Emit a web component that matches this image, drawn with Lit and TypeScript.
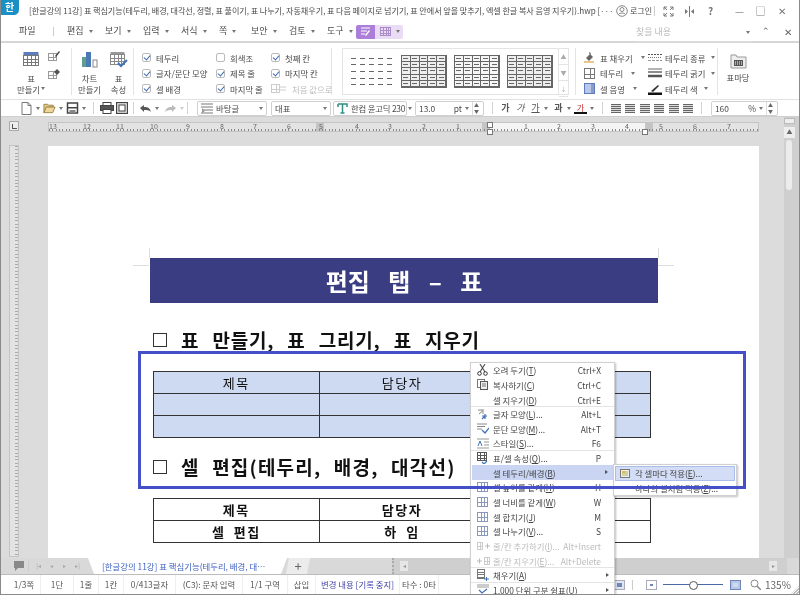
import { LitElement, html, css, svg } from "lit";
import { customElement } from "lit/decorators.js";

const ico = (w: number, h: number, body: unknown) =>
  html`<svg class="i" width=${w} height=${h} viewBox="0 0 ${w} ${h}">${body}</svg>`;

const grid = (x: number, y: number, w: number, h: number, cols: number, rows: number, c = "#777") => {
  const parts: unknown[] = [svg`<rect x=${x + 0.5} y=${y + 0.5} width=${w - 1} height=${h - 1} fill="none" stroke=${c}/>`];
  for (let i = 1; i < cols; i++) { const px = x + Math.round((w * i) / cols) + 0.5; parts.push(svg`<path d="M${px} ${y}V${y + h}" stroke=${c}/>`); }
  for (let i = 1; i < rows; i++) { const py = y + Math.round((h * i) / rows) + 0.5; parts.push(svg`<path d="M${x} ${py}H${x + w}" stroke=${c}/>`); }
  return parts;
};

const I = {
  tableBig: ico(16, 16, svg`<rect x="0.5" y="1" width="15" height="4" fill="#5b7cbd"/>${grid(0, 4, 16, 11, 4, 3, "#777")}`),
  tableS1: ico(13, 12, svg`${grid(0, 3, 9, 8, 2, 2, "#999")}<path d="M7 6l4-5 1 1-4 5z" fill="#444"/>`),
  tableS2: ico(13, 12, svg`${grid(0, 3, 9, 8, 2, 2, "#999")}<path d="M9 1l3 3-3 3-3-3z" fill="#555"/>`),
  chart: ico(16, 17, svg`<rect x="0" y="6" width="4" height="10" fill="#5f9e8e"/><rect x="4" y="1" width="5" height="15" fill="#4b79b5"/><rect x="11" y="9" width="4" height="7" fill="#fff" stroke="#888"/>`),
  tableProp: ico(18, 17, svg`<rect x="0.5" y="1" width="14" height="3" fill="#999"/>${grid(0, 3, 15, 11, 4, 3, "#888")}<path d="M8 12l3 3 6-6" fill="none" stroke="#4472b8" stroke-width="2"/>`),
  fill: ico(11, 11, svg`<path d="M2 6l4-4 3 3-4 4z" fill="#666"/><path d="M5 1l1-1 1 3z" fill="#333"/><path d="M0 10h10" stroke="#e8c98a" stroke-width="2"/>`),
  border: ico(11, 11, svg`${grid(0, 0, 11, 11, 2, 2, "#777")}`),
  shade: ico(11, 11, svg`<rect x="0.5" y="0.5" width="10" height="10" fill="#b9c8e8" stroke="#5b7cbd"/><rect x="7" y="1" width="3" height="9" fill="#8a9cc4"/>`),
  bType: ico(14, 10, svg`<path d="M0 1.5h14" stroke="#555" stroke-dasharray="2 1"/><path d="M0 4.5h14" stroke="#777" stroke-dasharray="1 1"/><path d="M0 7.5h14" stroke="#999" stroke-dasharray="3 1"/>`),
  bWeight: ico(14, 10, svg`<path d="M0 1h14" stroke="#666"/><path d="M0 4h14" stroke="#666" stroke-width="1.5"/><path d="M0 8h14" stroke="#555" stroke-width="2.5"/>`),
  bColor: ico(14, 12, svg`<path d="M3 8l7-6 1 1-6 6z" fill="#333"/><rect x="0" y="9.5" width="14" height="2.5" fill="#111"/>`),
  yard: ico(17, 16, svg`<path d="M1 2h5l1 2h9v11H1z" fill="#eee" stroke="#999"/><rect x="4.500" y="7.500" width="8" height="5" fill="#aaa" stroke="#555"/><path d="M6.500 8v5M8.500 8v5M10.500 8v5" stroke="#555"/>`),
  doc: ico(11, 13, svg`<path d="M1 .5h6l3 3v9H1z" fill="#fff" stroke="#777"/><path d="M7 .5v3h3" fill="none" stroke="#777"/>`),
  open: ico(14, 12, svg`<path d="M1 2h4l1 1h5v2H4L1 11z" fill="#e5c884" stroke="#9a8247"/><path d="M3.500 5H13l-2.500 6H1z" fill="#eed79a" stroke="#9a8247"/>`),
  save: ico(12, 12, svg`<rect x="1" y="1" width="10" height="10" fill="#fff" stroke="#444" stroke-width="1.500"/><rect x="1" y="5" width="10" height="1.500" fill="#444"/><rect x="3" y="8" width="6" height="3" fill="#888"/>`),
  print: ico(14, 12, svg`<rect x="3" y="0.500" width="8" height="3" fill="#fff" stroke="#444"/><rect x="0.500" y="3.500" width="13" height="5" fill="#555" stroke="#444"/><rect x="3" y="7.500" width="8" height="4" fill="#fff" stroke="#444"/>`),
  preview: ico(12, 12, svg`<rect x="0.500" y="0.500" width="11" height="11" fill="#ddd" stroke="#444" stroke-width="1.200"/><rect x="3" y="3" width="6" height="6" fill="#fff" stroke="#444"/>`),
  undo: ico(13, 9, svg`<path d="M1 4l4-3v2c4 0 6 1 7 5-2-2-4-2-7-2v2z" fill="#555"/>`),
  redo: ico(13, 9, svg`<path d="M12 4L8 1v2C4 3 2 4 1 8c2-2 4-2 7-2v2z" fill="#bbb"/>`),
  style: ico(12, 11, svg`<path d="M0 1h12M0 4h12M2 7h10M0 10h12" stroke="#777"/><path d="M1 5l3 3-3 2z" fill="#999"/>`),
  fontT: ico(11, 11, svg`<path d="M1 1h9v3M1 1v3M5.500 1v9M3.500 10h4" fill="none" stroke="#2f8f83" stroke-width="1.500"/>`),
  reset: ico(16, 11, svg`${grid(0, 1, 9, 9, 2, 2, "#ccc")}<path d="M9 4h6M9 7h6" stroke="#ccc"/>`),
  cut: ico(11, 12, svg`<path d="M3 0l5 8M8 0L3 8" stroke="#555" stroke-width="1.200" fill="none"/><circle cx="2.500" cy="9.500" r="1.800" fill="none" stroke="#333"/><circle cx="8.500" cy="9.500" r="1.800" fill="none" stroke="#333"/>`),
  copy: ico(11, 11, svg`<rect x="0.500" y="0.500" width="7" height="8" fill="#fff" stroke="#777"/><rect x="3.500" y="2.500" width="7" height="8" fill="#eee" stroke="#555"/><path d="M5 5h4M5 7h4" stroke="#777"/>`),
  charS: ico(11, 11, svg`<path d="M1 1h4v1.500L2 5M6 0v5" stroke="#888" fill="none"/><path d="M5 7h5M8 5v5M5 10l3-3" stroke="#4472b8" fill="none" stroke-width="1.200"/>`),
  para: ico(12, 11, svg`<path d="M0 1h10M0 3.500h8M0 6h5" stroke="#888"/><path d="M5 7l3 3 4-5" stroke="#4472b8" fill="none" stroke-width="1.300"/>`),
  styleM: ico(12, 11, svg`<path d="M0 1h12M7 4h5M7 7h5M0 10h12" stroke="#999"/><path d="M1 8l2-5 2 5" stroke="#4472b8" fill="none"/>`),
  prop: ico(12, 12, svg`${grid(0, 0, 10, 9, 3, 3, "#555")}<path d="M5 10l2 2 3-3" fill="none" stroke="#4472b8" stroke-width="1.200"/>`),
  g1: ico(11, 10, svg`${grid(0, 0, 11, 10, 3, 2, "#8899bb")}`),
  addRow: ico(13, 10, svg`${grid(0, 1, 6, 8, 2, 2, "#ccc")}<path d="M8 5h5M10.500 2.500v5" stroke="#bbb"/>`),
  delRow: ico(13, 10, svg`<path d="M0 5h5M2.500 2.500v5" stroke="#bbb"/>${grid(7, 1, 6, 8, 2, 2, "#ccc")}`),
  fillM: ico(12, 12, svg`${grid(0, 0, 8, 10, 1, 4, "#777")}<path d="M7 10h5M9.500 8v4" stroke="#4472b8"/>`),
  comma: ico(12, 11, svg`<path d="M0 1h12M0 3h12" stroke="#999"/><path d="M2 6l3 3 5-4" fill="none" stroke="#4472b8" stroke-width="1.300"/>`),
  pic: ico(10, 9, svg`<rect x="0.500" y="0.500" width="9" height="8" fill="#eee" stroke="#777"/><rect x="2" y="2" width="6" height="5" fill="#c9d3a5"/><rect x="2" y="2" width="3" height="2" fill="#e8b54a"/>`),
  user: ico(12, 12, svg`<circle cx="6" cy="6" r="5.300" fill="none" stroke="#888"/><circle cx="6" cy="4.500" r="2" fill="none" stroke="#888"/><path d="M2.500 9.500c1-2 6-2 7 0" fill="none" stroke="#888"/>`),
  expand: ico(11, 11, svg`<path d="M1 1l3 3M10 1L7 4M1 10l3-3M10 10L7 7M1 1h3M1 1v3M10 1H7M10 1v3M1 10h3M1 10V7M10 10H7M10 10V7" stroke="#777" fill="none"/>`),
  split: ico(11, 11, svg`<path d="M5.500 0v11" stroke="#777"/><path d="M4 5.500L1 3v5zM7 5.500L10 3v5z" fill="#777"/>`),
  logo: ico(18, 16, svg`<path d="M0 0h18v9c0 4-2 6-6 6H0z" fill="#1a90c4"/>`),
};

const rulerNums: [string, number][] = [
  ["13", 4], ["12", 38], ["11", 71], ["10", 105], ["9", 139], ["8", 173], ["7", 206], ["6", 240], ["5", 272], ["4", 308], ["3", 341], ["2", 375], ["1", 409],
  ["1", 477], ["2", 510], ["3", 544], ["4", 578], ["5", 612], ["6", 646], ["7", 680],
];

type Item = { i?: unknown; l: string; s?: string; d?: boolean; hi?: boolean; arrow?: boolean; sep?: boolean };
const label = (l: string) => {
  const m = l.match(/^(.*\()(.)(\).*)$/);
  return m ? html`${m[1]}<u>${m[2]}</u>${m[3]}` : l;
};
const menu: Item[] = [
  { i: I.cut, l: "오려 두기(T)", s: "Ctrl+X" },
  { i: I.copy, l: "복사하기(C)", s: "Ctrl+C" },
  { l: "셀 지우기(D)", s: "Ctrl+E", sep: true },
  { i: I.charS, l: "글자 모양(L)...", s: "Alt+L" },
  { i: I.para, l: "문단 모양(M)...", s: "Alt+T" },
  { i: I.styleM, l: "스타일(S)...", s: "F6", sep: true },
  { i: I.prop, l: "표/셀 속성(Q)...", s: "P" },
  { l: "셀 테두리/배경(B)", hi: true, arrow: true },
  { i: I.g1, l: "셀 높이를 같게(H)", s: "H" },
  { i: I.g1, l: "셀 너비를 같게(W)", s: "W" },
  { i: I.g1, l: "셀 합치기(J)", s: "M" },
  { i: I.g1, l: "셀 나누기(V)...", s: "S" },
  { i: I.addRow, l: "줄/칸 추가하기(I)...", s: "Alt+Insert", d: true },
  { i: I.delRow, l: "줄/칸 지우기(E)...", s: "Alt+Delete", d: true, sep: true },
  { i: I.fillM, l: "채우기(A)", arrow: true, sep: true },
  { i: I.comma, l: "1,000 단위 구분 쉼표(U)", arrow: true },
];

const status: [string, number, boolean?][] = [
  ["1/3쪽", 33], ["1단", 33], ["1줄", 25], ["1칸", 25], ["0/413글자", 52], ["(C3): 문자 입력", 67], ["1/1 구역", 45], ["삽입", 28], ["변경 내용 [기록 중지]", 84, true], ["타수 : 0타", 39],
];

@customElement("app-root")
export class AppRoot extends LitElement {
  static styles = css`
    :host { display: block; width: 800px; height: 595px; position: relative; overflow: hidden; background: #fff; font: 8.400px/1.2 "Noto Sans CJK KR", "Noto Sans", sans-serif; color: #4a4a4a; box-sizing: border-box; border: 1px solid #8a8a8a; border-top: 0; filter: blur(0.35px); }
    * { box-sizing: border-box; }
    svg.i { display: block; flex: none; }
    u { text-decoration: underline; }
    .arr { width: 0; height: 0; border: 2px solid transparent; border-top: 3px solid #777; border-bottom: 0; flex: none; }

    .title { height: 22px; display: flex; align-items: center; white-space: nowrap; }
    .logo { width: 28px; flex: none; align-self: flex-start; position: relative; }
    .logo b { position: absolute; left: 4px; top: 0; color: #fff; font-size: 10px; line-height: 14px; }
    .ttext { width: 587px; overflow: hidden; flex: none; font-size: 8.100px; line-height: 14px; word-spacing: -.2px; }
    .tright { display: flex; align-items: center; flex: none; }
    .login { margin: 0 2px; font-size: 8px; }
    .vsep { width: 1px; height: 10px; background: #ccc; flex: none; }
    .sp3 { width: 3px; }
    .sp8 { width: 8px; }
    .winbtn { width: 21px; display: flex; justify-content: center; color: #777; font-size: 10px; line-height: 12px; }

    .menubar { height: 21px; display: flex; align-items: center; border-bottom: 2px solid #d6d6d6; padding-left: 18px; position: relative; font-size: 9px; }
    .mi { display: flex; align-items: center; gap: 5px; width: 38px; }
    .mi.narrow { width: 32px; }
    .file { width: 34px; }
    .msep { width: 1px; height: 9px; background: #ccc; margin-right: 13px; }
    .tabA { width: 19px; height: 14px; background: #ab7fd9; display: flex; align-items: center; justify-content: center; border-radius: 2px 0 0 2px; margin-left: -9px; }
    .tabB { width: 28px; height: 14px; background: #eadcf4; display: flex; align-items: center; gap: 5px; padding-left: 5px; border-radius: 0 2px 2px 0; }
    .find { margin-left: auto; display: flex; align-items: center; height: 100%; padding-right: 7px; }
    .findbox { width: 116px; height: 18px; border-bottom: 1px solid #ddd; display: flex; align-items: center; justify-content: space-between; color: #bbb; padding-right: 2px; margin-top: 3px; }
    .caret { width: 13px; text-align: center; color: #666; margin-left: 7px; font-size: 9px; }
    .closex { width: 20px; text-align: right; color: #666; font-size: 10px; }

    .ribbon { height: 57px; display: flex; padding-top: 5px; padding-bottom: 5px; border-bottom: 1px solid #e2e2e2; }
    .g { border-right: 1px solid #e4e4e4; height: 47px; flex: none; display: flex; }
    .g1 { width: 71px; padding-left: 19px; gap: 6px; }
    .g2 { width: 62px; padding-left: 6px; gap: 6px; }
    .big { width: 22px; display: flex; flex-direction: column; align-items: center; text-align: center; line-height: 10.500px; padding-top: 3px; white-space: nowrap; }
    .big svg { margin-bottom: 6px; }
    .g2 .big { width: 23px; }
    .g2 .big svg { margin-bottom: 5px; }
    .big .mk { display: flex; align-items: center; gap: 1px; }
    .smalls { display: flex; flex-direction: column; gap: 6px; padding-top: 2px; }
    .g3 { width: 198px; padding-left: 8px; display: grid; grid-template-columns: 74px 55px 1fr; grid-auto-rows: 15.500px; padding-top: 2px; }
    .chk { display: flex; align-items: center; gap: 5px; white-space: nowrap; }
    .chk i { width: 9px; height: 9px; border: 1px solid #bbb; border-radius: 2px; background: #fff; position: relative; flex: none; }
    .chk i.on::after { content: ""; position: absolute; left: 2px; top: 0; width: 3px; height: 5px; border: solid #3f6cb0; border-width: 0 1.300px 1.300px 0; transform: rotate(40deg); }
    .chk.dis { color: #bbb; }
    .g4 { width: 244px; padding-left: 10px; }
    .gal { width: 227px; height: 47px; border: 1px solid #e4e4e4; display: flex; align-items: center; padding-left: 6px; gap: 7px; position: relative; }
    .thumb { width: 46px; height: 33px; display: grid; grid-template-columns: repeat(5, 1fr); grid-template-rows: repeat(5, 1fr); border: 1px solid #666; background: #eee; }
    .thumb span { border-right: 1px solid #666; border-bottom: 1px solid #666; display: flex; align-items: center; justify-content: center; }
    .thumb span::after { content: ""; width: 5px; height: 1px; background: #666; }
    .thumb.none { border: 0; background: none; width: 45px; }
    .thumb.none span { border: 0; }
    .thumb.b2 span { background: #f6f6f6; }
    .galbar { position: absolute; right: 0; top: 0; bottom: 0; width: 10px; border-left: 1px solid #e4e4e4; display: grid; grid-template-rows: 1fr 1fr 1fr; color: #aaa; font-size: 6px; text-align: center; line-height: 15px; }
    .galbar span { border-bottom: 1px solid #e4e4e4; }
    .g5 { width: 142px; padding-left: 8px; display: grid; grid-template-columns: 64px 1fr; grid-auto-rows: 15.500px; padding-top: 2px; }
    .cmd { display: flex; align-items: center; gap: 5px; white-space: nowrap; }
    .cmd.c { gap: 3px; }
    .cmd .arr { margin-left: 3px; }
    .g6 { border: 0; width: 40px; justify-content: flex-start; padding-top: 5px; flex-direction: column; align-items: center; gap: 3px; white-space: nowrap; }

    .tool { height: 17px; display: flex; align-items: center; padding-left: 19px; border-bottom: 1px solid #cfcfcf; }
    .pair { width: 23px; display: flex; align-items: center; gap: 3px; }
    .pair.wide { width: 25px; }
    .pair svg { width: 13px; }
    .one { width: 15px; display: flex; justify-content: center; }
    .pair .off { border-top-color: #ccc; }
    .tsep { width: 1px; height: 12px; background: #d4d4d4; flex: none; }
    .m4 { margin: 0 5px 0 4px; }
    .ml8 { margin-left: 8px; }
    .combo { height: 15px; border: 1px solid #d0d0d0; border-radius: 2px; background: #fff; display: flex; align-items: center; padding: 0 3px; gap: 3px; flex: none; white-space: nowrap; }
    .combo .grow { flex: 1; }
    .c1 { width: 70px; margin-left: 9px; }
    .c2 { width: 60px; margin-left: 4px; }
    .c3 { width: 74px; margin-left: 2px; letter-spacing: -.2px; }
    .c4 { width: 69px; margin-left: 8px; }
    .c5 { width: 67px; margin-left: 9px; }
    .spin { width: 8px; height: 13px; border-left: 1px solid #ddd; color: #666; font-size: 5px; line-height: 6px; text-align: center; }
    .fmt { display: flex; align-items: center; margin: 0 8px 0 5px; }
    .glyph { font-weight: 700; font-size: 9px; color: #555; width: 15px; text-align: center; }
    .glyph.it { font-style: italic; font-weight: 400; }
    .glyph.un { text-decoration: underline; font-weight: 400; }
    .fmt .arr { margin: 0 3px 0 1px; }
    .fmt .arr.last { margin: 0 0 0 3px; }
    .redg { color: #c33; width: 13px; border-bottom: 2px solid #111; font-size: 8px; line-height: 9px; text-align: center; }
    .alg { display: flex; gap: 4.400px; margin: 0 8px; }
    .alg i { width: 10px; height: 9px; display: block; background: repeating-linear-gradient(#666 0 1px, #ddd 1px 2px); }

    .work { height: 441px; background: #dcdcdc; display: flex; }
    .lcol { width: 47px; padding: 4px 0 0 8px; flex: none; }
    .corner { width: 10px; height: 10px; background: #eee; border: 1px solid #aaa; position: relative; }
    .corner::after { content: ""; position: absolute; left: 2px; top: 2px; width: 4px; height: 4px; border: solid #555; border-width: 0 0 1px 1px; }
    .vr { width: 10px; height: 412px; margin-top: 14px; background: #e3e3e3; border: 1px solid #c4c4c4; background-image: repeating-linear-gradient(#aaa 0 1px, transparent 1px 3.370px); background-size: 3px 100%; background-repeat: no-repeat; background-position: right; }
    .center { width: 711px; flex: none; padding-top: 5px; display: flex; flex-direction: column; }
    .ruler { height: 10px; background: #e3e3e3; border: 1px solid #c4c4c4; position: relative; flex: none; overflow: visible; }
    .ruler .ticks { position: absolute; left: 0; right: 0; bottom: 0; height: 2px; background: repeating-linear-gradient(90deg, #888 0 1px, transparent 1px 3.370px); }
    .ruler .sel { position: absolute; left: 441px; width: 155px; top: 0; bottom: 0; background: #f4f4f4; }
    .ruler .mark { position: absolute; top: 0; bottom: 0; width: 8px; background: #c4c4c4; }
    .mark.m1 { left: 267px; } .mark.m2 { left: 433px; } .mark.m3 { left: 596px; }
    .ruler span { position: absolute; top: -1px; font-size: 7px; line-height: 8px; color: #666; transform: translateX(-50%); }
    .ruler .h { position: absolute; width: 6px; height: 6px; background: #fff; border: 1px solid #777; }
    .h.a { left: 438px; top: -1px; } .h.b { left: 438px; top: 6px; } .h.c { left: 593px; top: 6px; }
    .page { margin-top: 14px; flex: 1; background: #fff; min-height: 0; overflow: hidden; padding: 112px 0 0 102px; position: relative; color: #111; }
    .crop { position: absolute; background: #ddd; }
    .cv1 { left: 101px; top: 102px; width: 1px; height: 10px; }
    .ch1 { left: 85px; top: 119px; width: 16px; height: 1px; }
    .cv2 { left: 610px; top: 102px; width: 1px; height: 10px; }
    .ch2 { left: 610px; top: 119px; width: 16px; height: 1px; }
    .hero { width: 508px; height: 45px; background: #3b3d82; color: #fff; font-size: 24px; font-weight: 700; line-height: 45px; text-align: center; word-spacing: 13px; }
    .h2 { display: flex; align-items: center; gap: 14px; font-size: 19px; font-weight: 700; line-height: 26px; margin-left: 3px; white-space: nowrap; }
    .h2 i { width: 14px; height: 14px; border: 1.500px solid #333; flex: none; }
    .h2.a { margin-top: 24px; word-spacing: 8px; letter-spacing: .8px; }
    .h2.b { margin-top: 16px; letter-spacing: 1.200px; word-spacing: 7px; }
    table { border-collapse: collapse; width: 498px; margin-left: 3px; table-layout: fixed; }
    td { border: 1px solid #333; height: 22px; padding: 0; text-align: center; font-size: 13px; line-height: 20px; letter-spacing: 1.500px; }
    .t1 { margin-top: 18px; }
    .t1 td { background: #ced9f2; }
    .t2 { margin-top: 18px; }
    .t2 td { font-weight: 700; word-spacing: 4px; }

    .rcol { flex: 1; position: relative; }
    .track { position: absolute; left: 25px; right: 0; top: 0; bottom: 0; background: #cfcfcf; }
    .sp { position: absolute; left: 25px; top: 1px; width: 11px; height: 6px; background: #eee; border: 1px solid #bbb; }
    .up { position: absolute; left: 25px; top: 10px; width: 11px; height: 11px; background: #eee; color: #666; font-size: 6px; text-align: center; line-height: 10px; }
    .thumbv { position: absolute; left: 27px; top: 23px; width: 6px; height: 50px; background: #ececec; border-radius: 3px; }

    .tabs { height: 17px; background: #d9d9d9; display: flex; align-items: stretch; border-bottom: 1px solid #bcbcbc; position: relative; }
    .tabctl { width: 87px; display: flex; align-items: center; padding-left: 13px; color: #aaa; font-size: 6px; flex: none; }
    .tabctl .vsep { margin: 0 3px 0 4px; }
    .tabctl em { font-style: normal; width: 13px; text-align: center; }
    .tab { width: 199px; flex: none; background: #fff; clip-path: polygon(0 0, 100% 0, 97% 100%, 3% 100%); color: #3b5fc0; padding: 0 20px 0 14px; line-height: 16px; white-space: nowrap; overflow: hidden; text-overflow: ellipsis; }
    .plus { width: 24px; flex: none; margin-left: -1px; background: #ececec; clip-path: polygon(12% 0, 100% 0, 88% 100%, 0 100%); text-align: center; font-size: 13px; line-height: 15px; color: #666; }
    .hs { margin-left: 82px; flex: 1; margin-right: 12px; display: flex; align-items: center; justify-content: space-between; padding: 0 10px 0 6px; background: #cfcfcf; color: #999; font-size: 6px; border-left: 2px dotted #aaa; }
    .hs em { font-style: normal; background: #e6e6e6; width: 8px; height: 10px; text-align: center; line-height: 10px; display: block; }

    .status { height: 20px; display: flex; align-items: center; background: #fff; white-space: nowrap; padding-left: 7px; color: #555; }
    .st { text-align: center; height: 100%; line-height: 18px; flex: none; border-right: 1px solid #eee; }
    .st.v { color: #3f3fa8; }
    .sright { position: absolute; left: 613px; bottom: 2px; height: 15px; display: flex; align-items: center; }
    .sright .vsep { margin-left: 7px; }
    .vb { width: 11px; height: 10px; border: 1px solid #aab; background: #dfe5f2; position: relative; flex: none; }
    .vb::after { content: ""; position: absolute; left: 2px; top: 2px; width: 5px; height: 4px; background: #6f86b8; }
    .vb.min { background: #fff; margin-left: 13px; }
    .vb.min::after { left: 3px; top: 3px; width: 3px; height: 2px; }
    .vb.max { background: #b6c8e6; border-color: #6f86b8; margin-left: 7px; }
    .vb.max::after { background: #cfdbf0; }
    .slider { width: 60px; height: 1px; background: #4a67a8; position: relative; margin-left: 6px; }
    .slider::after { content: ""; position: absolute; left: 26px; top: -3px; width: 7px; height: 7px; border-radius: 50%; background: #fff; border: 1px solid #555; }
    .lens { margin-left: 9px; }
    .pct { margin-left: 4px; font-size: 10px; color: #666; }
    .grip { position: absolute; right: 0; bottom: 0; width: 8px; height: 8px; background: repeating-linear-gradient(135deg, transparent 0 1px, #bbb 1px 2px); clip-path: polygon(100% 0, 100% 100%, 0 100%); }

    .ctx { position: absolute; left: 469px; top: 362px; width: 145px; background: #fff; border: 1px solid #d0d0d0; box-shadow: 1px 1px 2px rgba(0,0,0,.25); height: 240px; }
    .row { height: 14.650px; display: flex; align-items: center; padding: 0 13px 0 6px; white-space: nowrap; color: #444; position: relative; }
    .row .ic { width: 16px; flex: none; display: flex; justify-content: flex-start; }
    .row .lb { flex: 1; }
    .row.dis { color: #bbb; }
    .row.sep { box-shadow: inset 0 -1px 0 #e4e4e4; }
    .row.hi { background: #c9d5f2; margin: 0 1px; padding-left: 5px; }
    .tri { position: absolute; right: 5px; top: 5px; width: 0; height: 0; border: 2px solid transparent; border-left: 3px solid #555; border-right: 0; }
    .sub { position: absolute; left: 612px; top: 464px; width: 124px; height: 32px; background: #fff; border: 1px solid #d0d0d0; box-shadow: 1px 1px 2px rgba(0,0,0,.25); padding: 1px; }
    .subi { height: 15px; display: flex; align-items: center; gap: 5px; padding-left: 4px; white-space: nowrap; color: #444; }
    .subi.hi { background: #d3ddf5; border: 1px solid #a9bde8; }
    .subi.pl { padding-left: 20px; }
    .anno { position: absolute; left: 137px; top: 351px; width: 608px; height: 138px; border: 3px solid #4450c8; pointer-events: none; }
  `;

  private check(l: string, on: boolean) {
    return html`<div class="chk"><i class=${on ? "on" : ""}></i>${l}</div>`;
  }
  private thumb(cls: string) {
    return html`<div class="thumb ${cls}">${Array.from({ length: 25 }, () => html`<span></span>`)}</div>`;
  }

  render() {
    return html`
      <div class="title">
        <div class="logo">${I.logo}<b>한</b></div>
        <div class="ttext">[한글강의 11강] 표 핵심기능(테두리, 배경, 대각선, 정렬, 표 풀이기, 표 나누기, 자동채우기, 표 다음 페이지로 넘기기, 표 안에서 앞을 맞추기, 엑셀 한글 복사 음영 지우기).hwp [···</div>
        <div class="tright">
          ${I.user}<span class="login">로그인</span><span class="vsep"></span>
          <span class="sp3"></span><span class="winbtn">${I.expand}</span><span class="winbtn">${I.split}</span><span class="winbtn"><b>?</b></span>
          <span class="sp8"></span>
          <span class="winbtn">—</span><span class="winbtn">□</span><span class="winbtn">✕</span>
        </div>
      </div>

      <div class="menubar">
        <span class="file">파일</span><span class="msep"></span>
        ${["편집", "보기", "입력", "서식", "쪽", "보안", "검토", "도구"].map((m) => html`<span class="mi ${m === "쪽" ? "narrow" : ""}">${m}<span class="arr"></span></span>`)}
        <span class="tabA">${ico(11, 10, svg`<path d="M1 1h9M1 4h6M1 7h4" stroke="#fff"/><path d="M5 8l4-5 1 1-4 5z" fill="#fff"/>`)}</span>
        <span class="tabB">${ico(11, 9, svg`${grid(0, 0, 11, 9, 4, 3, "#a98cc8")}`)}<span class="arr"></span></span>
        <div class="find">
          <div class="findbox"><span>찾을 내용</span><span class="arr"></span></div>
          <span class="caret">⌃</span>
          <span class="closex">✕</span>
        </div>
      </div>

      <div class="ribbon">
        <div class="g g1">
          <div class="big">${I.tableBig}<span>표</span><span class="mk">만들기<span class="arr"></span></span></div>
          <div class="smalls">${I.tableS1}${I.tableS2}</div>
        </div>
        <div class="g g2">
          <div class="big">${I.chart}<span>차트</span><span>만들기</span></div>
          <div class="big">${I.tableProp}<span>표</span><span>속성</span></div>
        </div>
        <div class="g g3">
          ${this.check("테두리", true)}${this.check("회색조", false)}${this.check("첫째 칸", true)}
          ${this.check("글자/문단 모양", true)}${this.check("제목 줄", true)}${this.check("마지막 칸", true)}
          ${this.check("셀 배경", true)}${this.check("마지막 줄", true)}
          <div class="chk dis">${I.reset}처음 값으로</div>
        </div>
        <div class="g g4">
          <div class="gal">
            ${this.thumb("none")}${this.thumb("b1")}${this.thumb("b2")}${this.thumb("b1")}
            <div class="galbar"><span>▲</span><span>▼</span><span>↓</span></div>
          </div>
        </div>
        <div class="g g5">
          <div class="cmd">${I.fill}표 채우기<span class="arr"></span></div>
          <div class="cmd c">${I.bType}테두리 종류<span class="arr"></span></div>
          <div class="cmd">${I.border}테두리<span class="arr"></span></div>
          <div class="cmd c">${I.bWeight}테두리 굵기<span class="arr"></span></div>
          <div class="cmd">${I.shade}셀 음영<span class="arr"></span></div>
          <div class="cmd c">${I.bColor}테두리 색<span class="arr"></span></div>
        </div>
        <div class="g g6">${I.yard}<span>표마당</span></div>
      </div>

      <div class="tool">
        <span class="pair">${I.doc}<span class="arr"></span></span>
        <span class="pair">${I.open}<span class="arr"></span></span>
        <span class="pair">${I.save}<span class="arr"></span></span>
        <span class="tsep m4"></span>
        <span class="one">${I.print}</span><span class="one">${I.preview}</span>
        <span class="tsep m4"></span>
        <span class="pair wide">${I.undo}<span class="arr"></span></span>
        <span class="pair">${I.redo}<span class="arr off"></span></span>
        <span class="tsep"></span>
        <div class="combo c1">${I.style}<span class="grow">바탕글</span><span class="arr"></span></div>
        <div class="combo c2"><span class="grow">대표</span><span class="arr"></span></div>
        <div class="combo c3">${I.fontT}<span class="grow">한컴 윤고딕 230</span><span class="arr"></span></div>
        <div class="combo c4"><span class="grow">13.0</span><span>pt</span><span class="arr"></span><span class="spin">▲<br />▼</span></div>
        <span class="tsep ml8"></span>
        <div class="fmt">
          <span class="glyph">가</span><span class="glyph it">가</span><span class="glyph un">가</span><span class="arr"></span>
          <span class="glyph">과</span><span class="arr"></span><span class="redg">가</span><span class="arr last"></span>
        </div>
        <span class="tsep"></span>
        <div class="alg"><i></i><i></i><i></i><i></i><i></i><i></i></div>
        <span class="tsep"></span>
        <div class="combo c5"><span class="grow">160</span><span>%</span><span class="arr"></span><span class="spin">▲<br />▼</span></div>
      </div>

      <div class="work">
        <div class="lcol"><div class="corner"></div><div class="vr"></div></div>
        <div class="center">
          <div class="ruler">
            <div class="sel"></div>
            <div class="mark m1"></div><div class="mark m2"></div><div class="mark m3"></div>
            <div class="ticks"></div>
            ${rulerNums.map(([n, x]) => html`<span style="left:${x}px">${n}</span>`)}
            <div class="h a"></div><div class="h b"></div><div class="h c"></div>
          </div>
          <div class="page">
            <div class="crop cv1"></div><div class="crop ch1"></div><div class="crop cv2"></div><div class="crop ch2"></div>
            <div class="hero">편집 탭 – 표</div>
            <div class="h2 a"><i></i>표 만들기, 표 그리기, 표 지우기</div>
            <table class="t1">
              <tr><td>제목</td><td>담당자</td><td></td></tr>
              <tr><td></td><td></td><td></td></tr>
              <tr><td></td><td></td><td></td></tr>
            </table>
            <div class="h2 b"><i></i>셀 편집(테두리, 배경, 대각선)</div>
            <table class="t2">
              <tr><td>제목</td><td>담당자</td><td></td></tr>
              <tr><td>셀 편집</td><td>하 임</td><td></td></tr>
            </table>
          </div>
        </div>
        <div class="rcol"><div class="track"></div><div class="sp"></div><div class="up">▲</div><div class="thumbv"></div></div>
      </div>

      <div class="tabs">
        <div class="tabctl">
          ${ico(10, 10, svg`<path d="M0 0h10v7H4L1 10V7H0z" fill="#888"/>`)}
          <span class="vsep"></span>
          <em>|◂</em><em>◂</em><em>▸</em><em>▸|</em>
        </div>
        <div class="tab">[한글강의 11강] 표 핵심기능(테두리, 배경, 대각선, 정렬, 표 풀이기</div>
        <div class="plus">+</div>
        <div class="hs"><em>◂</em><em>▸</em></div>
      </div>

      <div class="status">
        ${status.map(([t, w, v]) => html`<div class="st ${v ? "v" : ""}" style="width:${w}px">${t}</div>`)}
      </div>
      <div class="sright">
        <span class="vb"></span><span class="vsep"></span>
        <span class="vb min"></span><span class="slider"></span><span class="vb max"></span>
        <span class="lens">${ico(11, 11, svg`<circle cx="4.500" cy="4.500" r="3.500" fill="none" stroke="#888"/><path d="M7 7l4 4" stroke="#888" stroke-width="1.500"/>`)}</span>
        <span class="pct">135%</span>
      </div>
      <div class="grip"></div>

      <div class="ctx">
        ${menu.map((m) => html`<div class="row ${m.d ? "dis" : ""} ${m.sep ? "sep" : ""} ${m.hi ? "hi" : ""}">
          <span class="ic">${m.i ?? ""}</span><span class="lb">${label(m.l)}</span>${m.s ? html`<span>${m.s}</span>` : ""}${m.arrow ? html`<span class="tri"></span>` : ""}
        </div>`)}
      </div>
      <div class="sub">
        <div class="subi hi">${I.pic}<span>각 셀마다 적용(<u>E</u>)...</span></div>
        <div class="subi pl"><span>하나의 셀처럼 적용(<u>Z</u>)...</span></div>
      </div>
      <div class="anno"></div>
    `;
  }
}
